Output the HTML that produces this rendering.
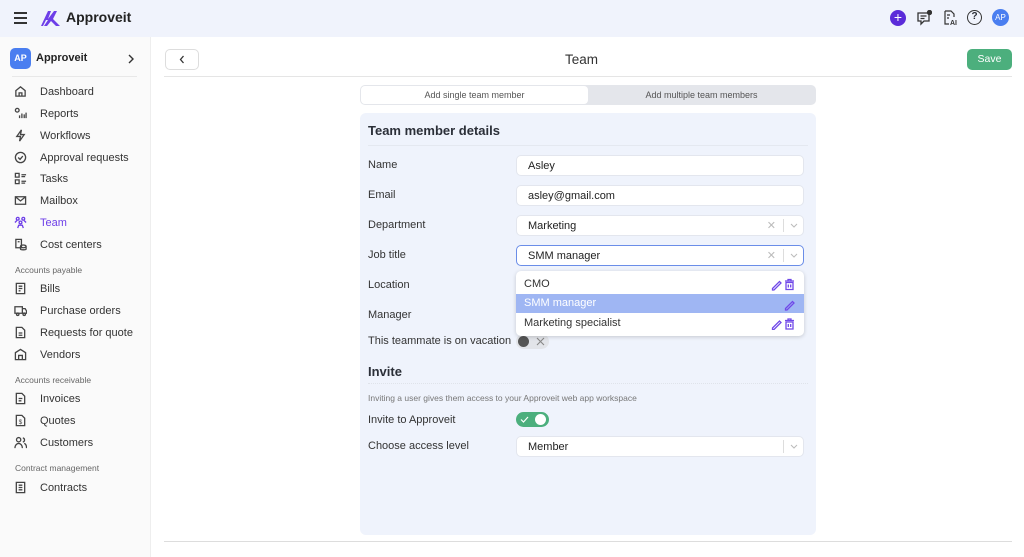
<!DOCTYPE html>
<html><head><meta charset="utf-8"><style>
*{box-sizing:border-box;margin:0;padding:0}
body{width:1024px;height:557px;overflow:hidden;font-family:"Liberation Sans",sans-serif;background:#fff;color:#2b2f38;position:relative;font-size:11px}
.abs{position:absolute}
.top{left:0;top:0;width:1024px;height:37px;background:#f0f3fc}
.side{left:0;top:37px;width:151px;height:520px;background:#fafafa;border-right:1px solid #eee}
.nav{left:14px;font-size:11px;color:#333;display:flex;align-items:center}
.nav svg{width:13px;height:13px;margin-right:13px;fill:none;stroke:#444;stroke-width:1.4}
.sec{left:15px;font-size:8.5px;color:#666}
.lbl{left:368px;font-size:11px;color:#333}
.inp{left:516px;width:288px;height:21px;background:#fff;border:1px solid #e3e6ee;border-radius:5px;font-size:11px;padding:4px 11px;color:#222}
.dd{position:absolute;right:0;top:3px;width:20px;height:13px;border-left:1px solid #ddd}
.dd svg{position:absolute;left:6px;top:4px}
.x{position:absolute;right:27px;top:3px;color:#bbb;font-size:11px}
.ico{fill:none;stroke:#7048e8;stroke-width:1.3}
</style></head><body>
<div class="abs top"></div>
<div class="abs" style="left:14px;top:12px;width:13px;height:2px;background:#333;box-shadow:0 5px #333,0 10px #333"></div>
<svg class="abs" style="left:40px;top:9px" width="22" height="18" viewBox="0 0 22 18"><path d="M1 17L8 2h3l-3 8 6-8h3l-4 8 7 7h-4l-5-5-4 5h-3l4-6-2 0-3 6z" fill="#6d3ee8"/></svg>
<div class="abs" style="left:66px;top:9px;font-size:14px;font-weight:bold;color:#222">Approveit</div>
<div class="abs" style="left:890px;top:10px;width:16px;height:16px;border-radius:50%;background:#5b2bd9;color:#fff;font-size:14px;line-height:15px;text-align:center">+</div>
<svg class="abs" style="left:916px;top:10px" width="16" height="16" viewBox="0 0 16 16" fill="none" stroke="#333" stroke-width="1.3"><path d="M2 3h11v8H8l-3 3v-3H2z M4.5 6h6 M4.5 8.5h4"/><circle cx="13.5" cy="2.5" r="2" fill="#333"/></svg>
<svg class="abs" style="left:942px;top:10px" width="16" height="16" viewBox="0 0 16 16" fill="none" stroke="#333" stroke-width="1.2"><path d="M3 1h6l3 3v3 M3 1v13h4 M5 5h3 M5 8h2"/><text x="8" y="15" font-size="7" fill="#333" stroke="none" font-family="Liberation Sans" font-weight="bold">AI</text></svg>
<div class="abs" style="left:967px;top:10px;width:15px;height:15px;border-radius:50%;border:1.4px solid #333;font-size:10px;text-align:center;line-height:12px;font-weight:bold">?</div>
<div class="abs" style="left:992px;top:9px;width:17px;height:17px;border-radius:50%;background:#4a7ef0;color:#fff;font-size:8px;text-align:center;line-height:17px">AP</div>

<div class="abs side"></div>
<div class="abs" style="left:10px;top:48px;width:21px;height:21px;border-radius:5px;background:#4a7ef0;color:#fff;font-size:9px;font-weight:bold;text-align:center;line-height:21px">AP</div>
<div class="abs" style="left:36px;top:52px;font-size:11px;font-weight:bold;color:#222">Approveit</div>
<svg class="abs" style="left:127px;top:54px" width="8" height="10" viewBox="0 0 8 10"><path d="M2 1l4 4-4 4" fill="none" stroke="#333" stroke-width="1.4"/></svg>
<div class="abs" style="left:12px;top:76px;width:125px;height:1px;background:#e8e8e8"></div>

<div class="abs nav" style="top:85px"><svg viewBox="0 0 14 14"><path d="M2 6l5-4 5 4v6H2z M5.5 12V8.5h3V12"/></svg>Dashboard</div>
<div class="abs nav" style="top:107px"><svg viewBox="0 0 14 14"><circle cx="3.5" cy="3.5" r="2"/><path d="M6 12V9 M8.5 12V7 M11 12V8 M13 12V6"/></svg>Reports</div>
<div class="abs nav" style="top:129px"><svg viewBox="0 0 14 14"><path d="M8 1L3 8h4l-1 5 5-7H7z"/></svg>Workflows</div>
<div class="abs nav" style="top:151px"><svg viewBox="0 0 14 14"><circle cx="7" cy="7" r="5.5"/><path d="M4.5 7l2 2 3-3.5"/></svg>Approval requests</div>
<div class="abs nav" style="top:172px"><svg viewBox="0 0 14 14"><path d="M1.5 1.5h4v4h-4z M1.5 8.5h4v4h-4z M8 3h5 M8 5h4 M8 10h5 M8 12h4"/></svg>Tasks</div>
<div class="abs nav" style="top:194px"><svg viewBox="0 0 14 14"><path d="M1.5 3h11v8h-11z M1.5 3l5.5 4.5L12.5 3"/></svg>Mailbox</div>
<div class="abs nav" style="top:216px;color:#6d3ee8"><svg viewBox="0 0 14 14" style="stroke:#6d3ee8"><circle cx="4" cy="3" r="1.5"/><circle cx="10" cy="3" r="1.5"/><circle cx="7" cy="7" r="1.5"/><path d="M1 7l2-2 M13 7l-2-2 M4 13l1-3h4l1 3"/></svg>Team</div>
<div class="abs nav" style="top:238px"><svg viewBox="0 0 14 14"><path d="M2 1.5h6v9H2z M4 4h2"/><ellipse cx="10" cy="9" rx="3" ry="1.5"/><path d="M7 9v3c0 1 6 1 6 0V9"/></svg>Cost centers</div>
<div class="abs sec" style="top:265px">Accounts payable</div>
<div class="abs nav" style="top:282px"><svg viewBox="0 0 14 14"><path d="M2.5 1.5h9v11h-9z M5 4.5h4 M5 7h4 M5 9.5h2"/></svg>Bills</div>
<div class="abs nav" style="top:304px"><svg viewBox="0 0 14 14"><path d="M1 3h8v7H1z M9 5h3l1.5 2.5V10H9"/><circle cx="4" cy="11" r="1.3"/><circle cx="11" cy="11" r="1.3"/></svg>Purchase orders</div>
<div class="abs nav" style="top:326px"><svg viewBox="0 0 14 14"><path d="M2.5 1.5h6l3 3v8h-9z M5 7.5h4 M5 10h4"/></svg>Requests for quote</div>
<div class="abs nav" style="top:348px"><svg viewBox="0 0 14 14"><path d="M1.5 12.5V5L7 1.5 12.5 5v7.5z M5 12.5V8h4v4.5"/></svg>Vendors</div>
<div class="abs sec" style="top:375px">Accounts receivable</div>
<div class="abs nav" style="top:392px"><svg viewBox="0 0 14 14"><path d="M2.5 1.5h6l3 3v8h-9z M5 7h4 M5 9.5h3"/></svg>Invoices</div>
<div class="abs nav" style="top:414px"><svg viewBox="0 0 14 14"><path d="M2.5 1.5h6l3 3v8h-9z"/><text x="5" y="11" font-size="7" stroke="none" fill="#444">$</text></svg>Quotes</div>
<div class="abs nav" style="top:436px"><svg viewBox="0 0 14 14"><circle cx="5" cy="4" r="2.3"/><path d="M1 13c0-3 2-5 4-5s4 2 4 5 M9.5 2a2.3 2.3 0 010 4.5 M11 8c1.5.5 2.5 2.5 2.5 5"/></svg>Customers</div>
<div class="abs sec" style="top:463px">Contract management</div>
<div class="abs nav" style="top:481px"><svg viewBox="0 0 14 14"><path d="M2.5 1.5h9v11h-9z M5 4.5h4 M5 7h4 M5 9.5h4"/></svg>Contracts</div>

<div class="abs" style="left:165px;top:49px;width:34px;height:21px;border:1px solid #ddd;border-radius:5px"></div>
<svg class="abs" style="left:179px;top:55px" width="6" height="9" viewBox="0 0 6 9"><path d="M4.5 1L1.5 4.5l3 3.5" fill="none" stroke="#333" stroke-width="1.3"/></svg>
<div class="abs" style="left:565px;top:52px;font-size:13.5px;color:#333">Team</div>
<div class="abs" style="left:967px;top:49px;width:45px;height:21px;border-radius:5px;background:#4caf7d;color:#fff;font-size:10.5px;text-align:center;line-height:21px">Save</div>
<div class="abs" style="left:164px;top:76px;width:848px;height:1px;background:#e5e5e5"></div>
<div class="abs" style="left:164px;top:541px;width:848px;height:1px;background:#ddd"></div>

<div class="abs" style="left:360px;top:85px;width:456px;height:20px;background:#e4e6eb;border-radius:5px"></div>
<div class="abs" style="left:361px;top:86px;width:227px;height:18px;background:#fff;border-radius:4px;font-size:9px;color:#555;text-align:center;line-height:18px">Add single team member</div>
<div class="abs" style="left:588px;top:86px;width:227px;height:18px;font-size:9px;color:#555;text-align:center;line-height:18px">Add multiple team members</div>

<div class="abs" style="left:360px;top:113px;width:456px;height:422px;background:#eff3fc;border-radius:6px"></div>
<div class="abs" style="left:368px;top:123px;font-size:13px;font-weight:bold;color:#2b2f38">Team member details</div>
<div class="abs" style="left:368px;top:145px;width:440px;height:1px;background:#e4e8f0"></div>

<div class="abs lbl" style="top:159px">Name</div><div class="abs inp" style="top:155px">Asley</div>
<div class="abs lbl" style="top:189px">Email</div><div class="abs inp" style="top:185px">asley@gmail.com</div>
<div class="abs lbl" style="top:219px">Department</div><div class="abs inp" style="top:215px">Marketing<span class="x">✕</span><span class="dd"><svg width="8" height="5" viewBox="0 0 8 5"><path d="M1 1l3 3 3-3" fill="none" stroke="#bbb"/></svg></span></div>
<div class="abs lbl" style="top:249px">Job title</div><div class="abs inp" style="top:245px;border:1.5px solid #6a8de8">SMM manager<span class="x">✕</span><span class="dd"><svg width="8" height="5" viewBox="0 0 8 5"><path d="M1 1l3 3 3-3" fill="none" stroke="#bbb"/></svg></span></div>
<div class="abs lbl" style="top:279px">Location</div>
<div class="abs lbl" style="top:309px">Manager</div>
<div class="abs lbl" style="top:335px">This teammate is on vacation</div>
<div class="abs" style="left:516px;top:334px;width:33px;height:15px;border-radius:8px;background:#e2e4e9"></div>
<div class="abs" style="left:518px;top:336px;width:11px;height:11px;border-radius:50%;background:#555"></div>
<svg class="abs" style="left:536px;top:337px" width="9" height="9" viewBox="0 0 9 9"><path d="M1 1l7 7M8 1L1 8" stroke="#888" stroke-width="1.1"/></svg>

<div class="abs" style="left:516px;top:271px;width:288px;height:65px;background:#fff;border-radius:5px;box-shadow:0 1px 4px rgba(0,0,0,.18)"></div>
<div class="abs" style="left:524px;top:278px;font-size:11px;color:#333">CMO</div>
<div class="abs" style="left:516px;top:294px;width:288px;height:19px;background:#9fb6f3"></div>
<div class="abs" style="left:524px;top:297px;font-size:11px;color:#fff">SMM manager</div>
<div class="abs" style="left:524px;top:317px;font-size:11px;color:#333">Marketing specialist</div>
<svg class="abs" style="left:771px;top:278px" width="26" height="52" viewBox="0 0 26 52"><g class="ico"><path d="M1.5 10.5l7-7 1.5 1.5-7 7H1.5z"/><path d="M14 3h9 M17 3V1.5h3V3 M15 4.5h7v7h-7z M17.3 6.5v3 M19.7 6.5v3"/><path d="M14.5 30.5l7-7 1.5 1.5-7 7h-1.5z"/><path d="M1.5 50l7-7 1.5 1.5-7 7H1.5z"/><path d="M14 42.5h9 M17 42.5V41h3v1.5 M15 44h7v7h-7z M17.3 46v3 M19.7 46v3"/></g></svg>

<div class="abs" style="left:368px;top:364px;font-size:13px;font-weight:bold;color:#2b2f38">Invite</div>
<div class="abs" style="left:368px;top:383px;width:440px;border-top:1px dotted #dfe3ea"></div>
<div class="abs" style="left:368px;top:393px;font-size:8.5px;color:#777">Inviting a user gives them access to your Approveit web app workspace</div>
<div class="abs lbl" style="top:414px">Invite to Approveit</div>
<div class="abs" style="left:516px;top:412px;width:33px;height:15px;border-radius:8px;background:#4caf7d"></div>
<svg class="abs" style="left:520px;top:416px" width="9" height="7" viewBox="0 0 9 7"><path d="M1 3.5l2.5 2.5L8 1" fill="none" stroke="#fff" stroke-width="1.2"/></svg>
<div class="abs" style="left:535px;top:414px;width:11px;height:11px;border-radius:50%;background:#fff"></div>
<div class="abs lbl" style="top:440px">Choose access level</div><div class="abs inp" style="top:436px">Member<span class="dd"><svg width="8" height="5" viewBox="0 0 8 5"><path d="M1 1l3 3 3-3" fill="none" stroke="#bbb"/></svg></span></div>
</body></html>
